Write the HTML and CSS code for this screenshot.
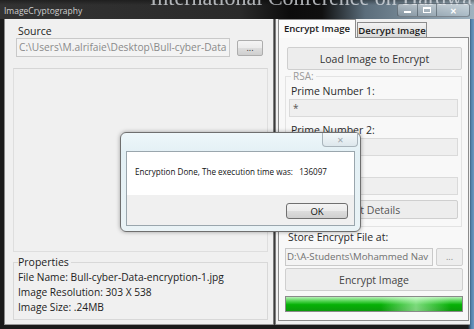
FILE: index.html
```html
<!DOCTYPE html>
<html>
<head>
<meta charset="utf-8">
<title>ImageCryptography</title>
<link rel="stylesheet" href="styles.css">
</head>
<body>
<div class="screen">
  <div class="titlebar">
    <span class="bgtext">International Conference on Hardwa</span>
    <span class="title">ImageCryptography</span>
    <div class="winbtns">
      <span class="wb wb-min"><span class="g-min"></span></span>
      <span class="wb wb-max"><span class="g-max"></span></span>
      <span class="wb wb-close">&#x2715;</span>
    </div>
  </div>
  <div class="client">
    <div class="left">
      <div class="lbl-source">Source</div>
      <div class="src-row">
        <div class="tb tb-path">C:\Users\M.alrifaie\Desktop\Bull-cyber-Data</div>
        <div class="btn btn-dots">...</div>
      </div>
      <div class="imgbox"></div>
      <div class="props">
        <div class="legend">Properties</div>
        <div class="prop">File Name: Bull-cyber-Data-encryption-1.jpg</div>
        <div class="prop">Image Resolution: 303 X 538</div>
        <div class="prop">Image Size: .24MB</div>
      </div>
    </div>
    <div class="split"></div>
    <div class="right">
      <div class="tabs">
        <div class="tab tab-active">Encrypt Image</div>
        <div class="tab tab-idle">Decrypt Image</div>
      </div>
      <div class="page">
        <div class="btn btn-load">Load Image to Encrypt</div>
        <div class="rsa">
          <div class="rsa-legend">RSA:</div>
          <div class="lbl">Prime Number 1:</div>
          <div class="tb2">*</div>
          <div class="lbl">Prime Number 2:</div>
          <div class="tb2"></div>
          <div class="lbl">Public Key:</div>
          <div class="tb2"></div>
          <div class="btn btn-get">Get Details</div>
        </div>
        <div class="lbl-store">Store Encrypt File at:</div>
        <div class="store-row">
          <div class="tb tb-store">D:\A-Students\Mohammed Nav</div>
          <div class="btn btn-dots2">...</div>
        </div>
        <div class="btn btn-enc">Encrypt Image</div>
        <div class="progress"><div class="progress-glow"></div></div>
      </div>
    </div>
  </div>

  <div class="dialog">
    <div class="dlg-close">&#x2715;</div>
    <div class="dlg-inner">
      <div class="dlg-msg">Encryption Done, The execution time was:&nbsp;&nbsp; 136097</div>
      <div class="dlg-foot">
        <div class="btn btn-ok">OK</div>
      </div>
    </div>
  </div>
</div>
</body>
</html>
```

FILE: styles.css
```css
* { box-sizing: border-box; }
html, body { margin: 0; padding: 0; }
body {
  width: 474px; height: 329px; overflow: hidden;
  background: #141414;
  font-family: "Open Sans", "Noto Sans", sans-serif;
  font-size: 10px;
  color: #222;
}
.screen {
  position: relative;
  width: 474px; height: 329px; overflow: hidden;
  background: linear-gradient(to right, #1b1b1b 0, #1b1b1b 468px, #4f7fa8 471px, #6d98c0 474px);
}

/* title bar */
.titlebar {
  position: relative;
  height: 19px;
  display: flex;
  align-items: center;
  padding-left: 4px;
  overflow: hidden;
  background:
    linear-gradient(to bottom, rgba(0,0,0,0.35) 0, rgba(0,0,0,0) 5px, rgba(0,0,0,0) 100%),
    linear-gradient(to right, #333 0, #2a2a2a 240px, #0c0c0c 290px, #101010 322px, #5b6d7b 365px, #9fb3c0 474px);
}
.bgtext {
  position: absolute;
  left: 150px; top: -13px;
  font-family: "Liberation Serif", serif;
  font-size: 22px;
  line-height: 22px;
  white-space: nowrap;
  color: rgba(225,230,235,0.75);
  filter: blur(0.6px);
}
.title {
  position: relative;
  color: #cfcfcf;
  font-size: 8.5px;
  margin-top: 1px;
}
.winbtns {
  position: relative;
  margin-left: auto;
  margin-right: 4px;
  align-self: flex-start;
  margin-top: 3px;
  display: flex;
  height: 14px;
}
.wb {
  display: flex; align-items: center; justify-content: center;
  height: 14px;
  background: linear-gradient(to bottom, rgba(255,255,255,0.45), rgba(255,255,255,0.15));
  border: 1px solid rgba(40,50,60,0.45);
  color: #fff;
  font-size: 8px;
}
.wb-min { width: 21px; border-radius: 3px 0 0 3px; }
.wb-max { width: 19px; border-left: none; }
.wb-close { width: 33px; border-left: none; border-radius: 0 3px 3px 0; font-weight: bold; }
.g-min { width: 7px; height: 2px; background: #fff; margin-top: 4px; }
.g-max { width: 8px; height: 6px; border: 1px solid #fff; border-top-width: 2px; }

/* client area */
.client {
  display: flex;
  height: 306px;
  padding-left: 4px;
}
.left {
  width: 269px;
  background: #f0f0f0;
  border-left: 1px solid #8a8a8a;
  border-bottom: 1px solid #9a9a9a;
  padding-left: 8px;
}
.lbl-source {
  margin-top: 6px;
  margin-left: 5px;
  height: 13px;
  line-height: 13px;
  font-size: 10.5px;
  color: #1e1e1e;
}
.src-row {
  display: flex;
  align-items: flex-start;
  gap: 7px;
  margin-left: 3px;
}
.tb {
  height: 19px;
  line-height: 17px;
  border: 1px solid #c9c9c9;
  background: #f3f3f3;
  color: #8a8a8a;
  white-space: nowrap;
  overflow: hidden;
  padding-left: 2px;
  font-size: 10.2px;
}
.tb-path { width: 214px; }
.btn {
  display: flex; align-items: center; justify-content: center;
  border: 1px solid #adadad;
  border-radius: 2px;
  background: linear-gradient(to bottom, #f4f4f4 0, #ebebeb 50%, #dddddd 51%, #cfcfcf 100%);
  color: #333;
  white-space: nowrap;
}
.btn-dots { width: 26px; height: 16px; margin-top: 2px; font-size: 9px; line-height: 9px; padding-bottom: 2px; }
.imgbox {
  margin-top: 11px;
  width: 255px;
  height: 184px;
  border: 1px solid #dedede;
  border-top-color: #d6d6d6;
}
.props {
  position: relative;
  margin-top: 10px;
  width: 255px;
  height: 58px;
  border: 1px solid #d8d8d8;
  padding-top: 7px;
  padding-left: 4px;
}
.legend {
  position: absolute;
  left: 4px; top: -7px;
  height: 13px; line-height: 13px;
  background: #f0f0f0;
  padding-right: 2px;
  font-size: 10.5px;
  color: #222;
}
.prop {
  height: 15px;
  line-height: 15px;
  font-size: 10.2px;
  color: #222;
  white-space: nowrap;
}

.split {
  width: 3px;
  background: linear-gradient(to right, #9a9a9a, #3c3c3c 50%, #a0a0a0);
}

/* right side */
.right {
  width: 194px;
  background: #f0f0f0;
  padding-left: 2px;
  border-bottom: 1px solid #9a9a9a;
}
.tabs {
  display: flex;
  align-items: flex-end;
  height: 18px;
  position: relative;
  z-index: 1;
}
.tab {
  display: flex; align-items: center; justify-content: center;
  font-size: 9.6px;
  font-weight: 600;
  color: #1a1a1a;
  border: 1px solid #8c8c8c;
  border-bottom: none;
  white-space: nowrap;
}
.tab-active {
  width: 78px; height: 19px;
  margin-bottom: -1px;
  background: #fbfbfb;
  padding-bottom: 2px;
}
.tab-idle {
  width: 70px; height: 15px;
  margin-left: 1px;
  background: linear-gradient(to bottom, #f2f2f2, #d9d9d9);
}
.page {
  width: 191px;
  height: 284px;
  border: 1px solid #8c8c8c;
  background: #f8f8f8;
  padding-top: 9px;
}
.btn-load {
  margin-left: 8px;
  width: 175px; height: 23px;
  font-size: 10.5px;
  color: #333;
  background: #ededed;
  border-color: #cfcfcf;
}
.rsa {
  position: relative;
  margin-top: 6px;
  margin-left: 6px;
  width: 177px;
  height: 151px;
  border: 1px solid #e3e3e3;
  padding-left: 3px;
  padding-top: 7px;
}
.rsa-legend {
  position: absolute;
  left: 5px; top: -7px;
  height: 13px; line-height: 13px;
  background: #f8f8f8;
  padding: 0 2px;
  font-size: 10px;
  color: #9a9a9a;
}
.lbl {
  height: 14px; line-height: 14px;
  margin-left: 2px;
  margin-top: 6px;
  font-size: 10.5px;
  color: #2a2a2a;
}
.rsa .lbl:nth-child(2) { margin-top: 0; }
.tb2 {
  margin-top: 1px;
  width: 169px; height: 18px;
  border: 1px solid #dadada;
  background: #efefef;
  color: #555;
  font-size: 10px;
  line-height: 16px;
  padding-left: 3px;
}
.btn-get {
  margin-top: 5px;
  width: 169px; height: 19px;
  font-size: 10.5px;
  color: #555;
  background: #ededed;
  border-color: #cfcfcf;
}
.lbl-store {
  margin-top: 3px;
  margin-left: 9px;
  height: 14px; line-height: 14px;
  font-size: 10.5px;
  color: #2a2a2a;
}
.store-row {
  display: flex;
  gap: 3px;
  margin-top: 4px;
  margin-left: 6px;
}
.tb-store { width: 148px; height: 18px; line-height: 16px; color: #707070; font-size: 9.7px; padding-left: 1px; }
.btn-dots2 {
  width: 27px; height: 18px;
  font-size: 9px; line-height: 9px; padding-bottom: 2px;
  color: #888;
  background: #ededed;
  border-color: #cfcfcf;
}
.btn-enc {
  margin-top: 2px;
  margin-left: 6px;
  width: 178px; height: 23px;
  font-size: 10.5px;
  color: #444;
  background: #ededed;
  border-color: #cfcfcf;
}
.progress {
  position: relative;
  margin-top: 5px;
  margin-left: 6px;
  width: 178px; height: 16px;
  border: 1px solid #8a8a8a;
  background: linear-gradient(to bottom, #b8f0b8 0, #4fd34f 30%, #06b106 55%, #0c9a0c 100%);
  overflow: hidden;
}
.progress-glow {
  position: absolute;
  left: 95px; top: 0; bottom: 0; width: 70px;
  background: linear-gradient(to right, rgba(255,255,255,0), rgba(220,255,220,0.55) 50%, rgba(255,255,255,0));
}

/* message box */
.dialog {
  position: absolute;
  left: 120px; top: 132px;
  width: 241px; height: 100px;
  border: 1px solid #6f6f6f;
  border-radius: 6px;
  background: linear-gradient(to bottom, #eef7fa 0, #e3f0f5 20%, #eaf3f6 100%);
  box-shadow: 0 0 4px rgba(0,0,0,0.35);
  padding: 18px 5px 5px 5px;
}
.dlg-close {
  position: absolute;
  right: 2px; top: 0;
  width: 36px; height: 14px;
  border: 1px solid #a9b4bb;
  border-top: none;
  border-radius: 0 0 4px 4px;
  background: linear-gradient(to bottom, #f4f8fa, #dde7ec);
  color: #a0a8ae;
  font-size: 8px;
  display: flex; align-items: center; justify-content: center;
}
.dlg-inner {
  height: 75px;
  border: 1px solid #9aa6ad;
  display: flex;
  flex-direction: column;
}
.dlg-msg {
  height: 43px;
  background: #fff;
  padding-left: 8px;
  padding-top: 14px;
  font-size: 8.1px;
  line-height: 12px;
  color: #111;
  white-space: nowrap;
}
.dlg-foot {
  flex: 1;
  background: #f0f0f0;
  display: flex;
  justify-content: flex-end;
  padding-top: 8px;
  padding-right: 6px;
}
.btn-ok {
  width: 62px; height: 16px;
  font-size: 9.5px;
  color: #111;
  border-color: #707070;
  border-radius: 3px;
}
```
